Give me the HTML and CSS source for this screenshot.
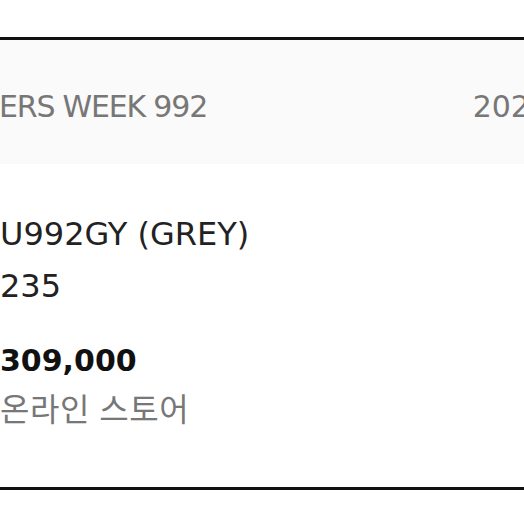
FILE: index.html
```html
<!DOCTYPE html>
<html lang="ko">
<head>
<meta charset="utf-8">
<link rel="stylesheet" href="styles.css">
</head>
<body>
<div class="page">
  <section class="card">
    <header class="card-head">
      <span class="event">ERS WEEK 992</span>
      <span class="date">2023</span>
    </header>
    <div class="card-body">
      <p class="line model">U992GY (GREY)</p>
      <p class="line size">235</p>
      <p class="price">309,000</p>
      <p class="store">온라인 스토어</p>
    </div>
  </section>
</div>
</body>
</html>
```
FILE: styles.css
```css
html, body {
  margin: 0;
  padding: 0;
  background: #fff;
  overflow: hidden;
}
.page {
  width: 524px;
  height: 524px;
  padding-top: 37px;
  box-sizing: border-box;
  overflow: hidden;
  font-family: "DejaVu Sans", "Noto Sans CJK KR", sans-serif;
}
.card {
  border-top: 3px solid #111;
  border-bottom: 3px solid #111;
}
.card-head {
  height: 124px;
  box-sizing: border-box;
  background: #fafafa;
  display: flex;
  align-items: center;
  justify-content: space-between;
  padding-top: 9px;
  color: #777;
  font-size: 30px;
  line-height: 36px;
  white-space: nowrap;
}
.event {
  margin-left: -1px;
  letter-spacing: -1.2px;
}
.date {
  margin-right: -25px;
}
.card-body {
  padding: 44px 0 60px;
}
.card-body p {
  margin: 0;
  white-space: nowrap;
}
.line {
  font-size: 32px;
  line-height: 52px;
  color: #222;
}
.card-body .price {
  margin-top: 31px;
  font-size: 30px;
  line-height: 36px;
  font-weight: 700;
  color: #111;
}
.card-body .store {
  margin-top: 8px;
  font-family: "Noto Sans CJK KR", sans-serif;
  font-size: 32px;
  line-height: 40px;
  letter-spacing: 0.5px;
  color: #777;
}
```
